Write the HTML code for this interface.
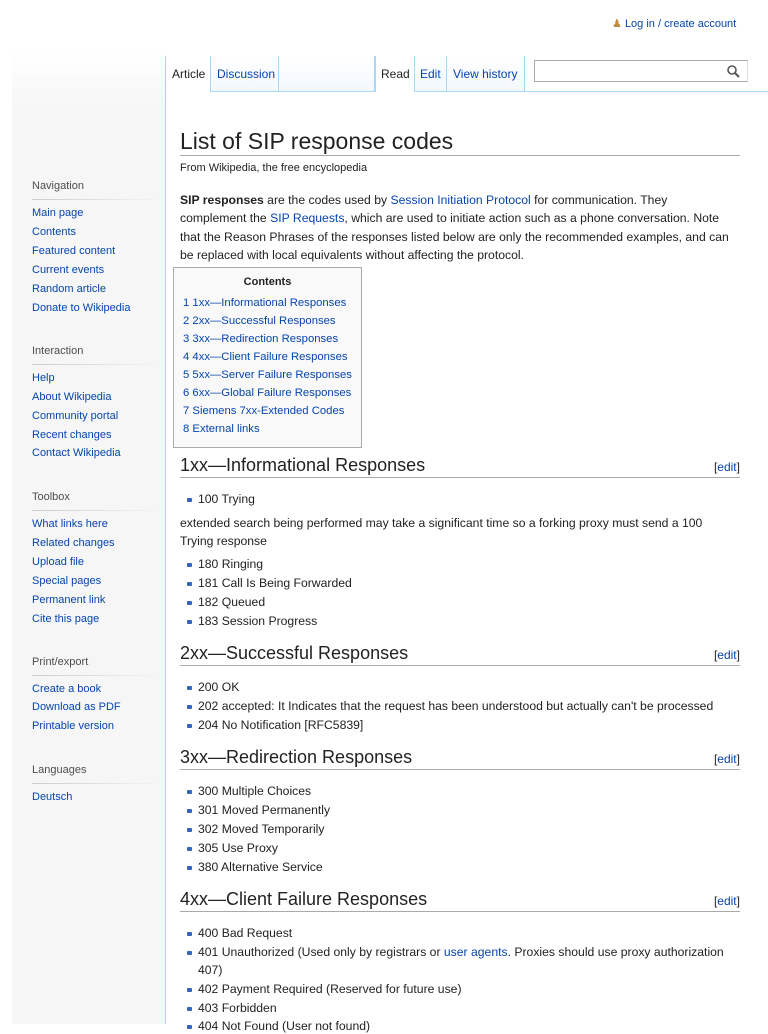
<!DOCTYPE html>
<html><head><meta charset="utf-8"><style>
body{margin:0;width:768px;height:1024px;overflow:hidden;background:#fff;font-family:"Liberation Sans",sans-serif;color:#222;position:relative}
a{color:#0645ad;text-decoration:none}
.a{position:absolute;white-space:nowrap;line-height:16px}
#side{position:absolute;left:12px;top:50px;width:153px;height:974px;background:linear-gradient(#fff 0,#f6f6f6 60px,#f6f6f6)}
.sh{position:absolute;left:32px;font-size:11px;color:#4d4d4d;line-height:14px}
.sl{position:absolute;left:32px;font-size:11px;line-height:14px}
.sep{position:absolute;left:32px;width:130px;height:1px;background:linear-gradient(to right,#ccc,#f6f6f6)}
#content{position:absolute;left:165px;top:92px;width:603px;height:932px;background:#fff;border-left:1px solid #a7d7f9}
.t{font-size:12.2px}
.b{font-size:12.2px}
.b:before{content:"";position:absolute;left:-11px;top:7px;width:5px;height:4px;background:#3366bb;border-radius:1px}
.h2{position:absolute;left:180px;width:560px;border-bottom:1px solid #aaa;font-size:18px;line-height:22px;height:23px}
.ed{position:absolute;right:0;top:2px;font-size:12px}
.toc{font-size:11.3px;left:183px}
.tab{position:absolute;top:56px;height:36px;font-size:12px;line-height:36px;background:linear-gradient(#fff,#f3f8fd);border-right:1px solid #a7d7f9;border-bottom:1px solid #a7d7f9;box-sizing:border-box}
</style></head><body>
<div id="side"></div>
<div class="a" style="left:612px;top:16px;font-size:11px"><span style="color:#c08a40">&#9823;</span> <a>Log in / create account</a></div>
<div class="tab" style="left:165px;width:46px;background:#fff;border-left:1px solid #a7d7f9;border-bottom:none"><span style="padding-left:6px">Article</span></div>
<div class="tab" style="left:211px;width:68px"><a style="padding-left:6px">Discussion</a></div>
<div class="tab" style="left:279px;width:96px;"></div>
<div class="tab" style="left:375px;width:40px;background:#fff;border-left:1px solid #a7d7f9;border-bottom:none"><span style="padding-left:5px">Read</span></div>
<div class="tab" style="left:415px;width:32px"><a style="padding-left:5px">Edit</a></div>
<div class="tab" style="left:447px;width:78px"><a style="padding-left:6px">View history</a></div>
<div class="tab" style="left:525px;width:243px;border-right:none;background:#fff"></div>
<div style="position:absolute;left:534px;top:60px;width:214px;height:22px;border:1px solid #aaa;border-right-color:#ddd;background:#fff;box-sizing:border-box"></div>
<svg style="position:absolute;left:727px;top:65px" width="13" height="13"><circle cx="5" cy="5" r="4" fill="none" stroke="#555" stroke-width="1.6"/><line x1="8" y1="8" x2="12" y2="12" stroke="#555" stroke-width="2"/></svg>
<div id="content"></div>

<div class="sh" style="top:179px">Navigation</div><div class="sep" style="top:199px"></div>
<div class="sl" style="top:206px"><a>Main page</a></div>
<div class="sl" style="top:225px"><a>Contents</a></div>
<div class="sl" style="top:244px"><a>Featured content</a></div>
<div class="sl" style="top:263px"><a>Current events</a></div>
<div class="sl" style="top:282px"><a>Random article</a></div>
<div class="sl" style="top:301px"><a>Donate to Wikipedia</a></div>
<div class="sh" style="top:344px">Interaction</div><div class="sep" style="top:364px"></div>
<div class="sl" style="top:371px"><a>Help</a></div>
<div class="sl" style="top:390px"><a>About Wikipedia</a></div>
<div class="sl" style="top:409px"><a>Community portal</a></div>
<div class="sl" style="top:428px"><a>Recent changes</a></div>
<div class="sl" style="top:446px"><a>Contact Wikipedia</a></div>
<div class="sh" style="top:490px">Toolbox</div><div class="sep" style="top:510px"></div>
<div class="sl" style="top:517px"><a>What links here</a></div>
<div class="sl" style="top:536px"><a>Related changes</a></div>
<div class="sl" style="top:555px"><a>Upload file</a></div>
<div class="sl" style="top:574px"><a>Special pages</a></div>
<div class="sl" style="top:593px"><a>Permanent link</a></div>
<div class="sl" style="top:612px"><a>Cite this page</a></div>
<div class="sh" style="top:655px">Print/export</div><div class="sep" style="top:675px"></div>
<div class="sl" style="top:682px"><a>Create a book</a></div>
<div class="sl" style="top:700px"><a>Download as PDF</a></div>
<div class="sl" style="top:719px"><a>Printable version</a></div>
<div class="sh" style="top:763px">Languages</div><div class="sep" style="top:783px"></div>
<div class="sl" style="top:790px"><a>Deutsch</a></div>

<div class="a" style="left:180px;top:127px;font-size:23px;line-height:28px;width:560px;border-bottom:1px solid #aaa;height:28px">List of SIP response codes</div>
<div class="a" style="left:180px;top:160px;font-size:11px">From Wikipedia, the free encyclopedia</div>
<div class="a t" style="left:180px;top:192px"><b>SIP responses</b> are the codes used by <a>Session Initiation Protocol</a> for communication. They</div>
<div class="a t" style="left:180px;top:210px">complement the <a>SIP Requests</a>, which are used to initiate action such as a phone conversation. Note</div>
<div class="a t" style="left:180px;top:229px">that the Reason Phrases of the responses listed below are only the recommended examples, and can</div>
<div class="a t" style="left:180px;top:247px">be replaced with local equivalents without affecting the protocol.</div>

<div style="position:absolute;left:173px;top:267px;width:189px;height:181px;background:#f9f9f9;border:1px solid #aaa;box-sizing:border-box"></div>
<div class="a" style="left:173px;width:189px;text-align:center;top:274px;font-size:11px;font-weight:bold">Contents</div>
<div class="a toc" style="top:295px"><a>1 1xx—Informational Responses</a></div>
<div class="a toc" style="top:313px"><a>2 2xx—Successful Responses</a></div>
<div class="a toc" style="top:331px"><a>3 3xx—Redirection Responses</a></div>
<div class="a toc" style="top:349px"><a>4 4xx—Client Failure Responses</a></div>
<div class="a toc" style="top:367px"><a>5 5xx—Server Failure Responses</a></div>
<div class="a toc" style="top:385px"><a>6 6xx—Global Failure Responses</a></div>
<div class="a toc" style="top:403px"><a>7 Siemens 7xx-Extended Codes</a></div>
<div class="a toc" style="top:421px"><a>8 External links</a></div>

<div class="h2" style="top:454px">1xx—Informational Responses<span class="ed">[<a>edit</a>]</span></div>
<div class="a b" style="left:198px;top:491px">100 Trying</div>
<div class="a t" style="left:180px;top:515px">extended search being performed may take a significant time so a forking proxy must send a 100</div>
<div class="a t" style="left:180px;top:533px">Trying response</div>
<div class="a b" style="left:198px;top:556px">180 Ringing</div>
<div class="a b" style="left:198px;top:575px">181 Call Is Being Forwarded</div>
<div class="a b" style="left:198px;top:594px">182 Queued</div>
<div class="a b" style="left:198px;top:613px">183 Session Progress</div>

<div class="h2" style="top:642px">2xx—Successful Responses<span class="ed">[<a>edit</a>]</span></div>
<div class="a b" style="left:198px;top:679px">200 OK</div>
<div class="a b" style="left:198px;top:698px">202 accepted: It Indicates that the request has been understood but actually can't be processed</div>
<div class="a b" style="left:198px;top:717px">204 No Notification [RFC5839]</div>

<div class="h2" style="top:746px">3xx—Redirection Responses<span class="ed">[<a>edit</a>]</span></div>
<div class="a b" style="left:198px;top:783px">300 Multiple Choices</div>
<div class="a b" style="left:198px;top:802px">301 Moved Permanently</div>
<div class="a b" style="left:198px;top:821px">302 Moved Temporarily</div>
<div class="a b" style="left:198px;top:840px">305 Use Proxy</div>
<div class="a b" style="left:198px;top:859px">380 Alternative Service</div>

<div class="h2" style="top:888px">4xx—Client Failure Responses<span class="ed">[<a>edit</a>]</span></div>
<div class="a b" style="left:198px;top:925px">400 Bad Request</div>
<div class="a b" style="left:198px;top:944px">401 Unauthorized (Used only by registrars or <a>user agents</a>. Proxies should use proxy authorization</div>
<div class="a t" style="left:198px;top:962px">407)</div>
<div class="a b" style="left:198px;top:981px">402 Payment Required (Reserved for future use)</div>
<div class="a b" style="left:198px;top:1000px">403 Forbidden</div>
<div class="a b" style="left:198px;top:1018px">404 Not Found (User not found)</div>
</body></html>
